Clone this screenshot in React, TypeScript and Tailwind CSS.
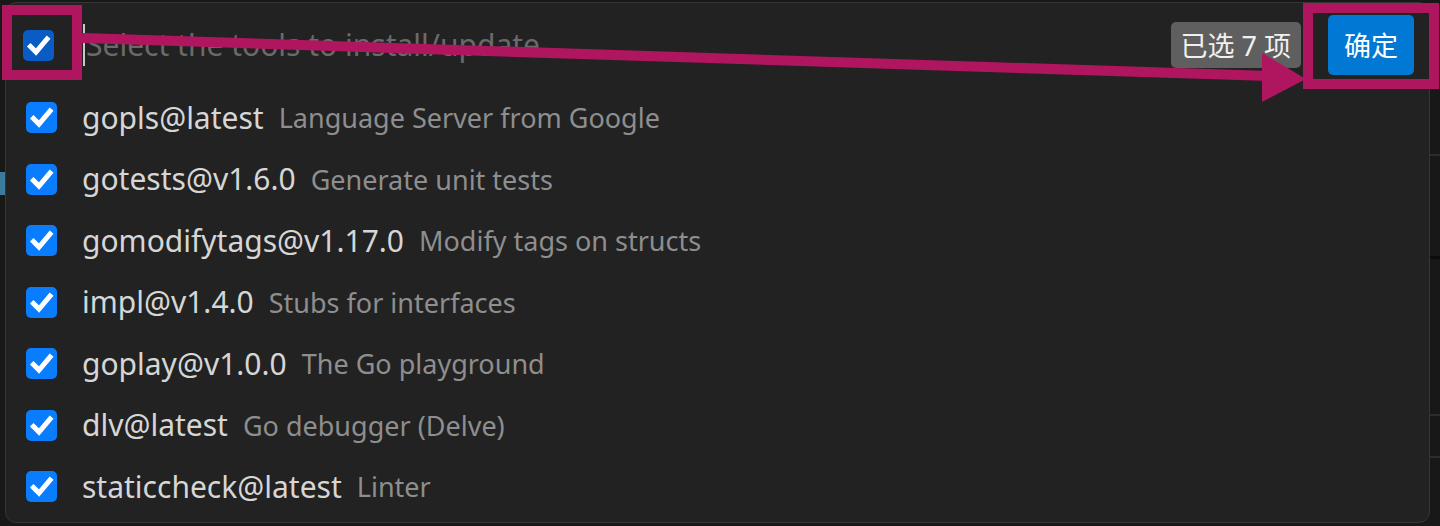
import React from "react";

const TOOLS = [
  { name: "gopls@latest", desc: "Language Server from Google" },
  { name: "gotests@v1.6.0", desc: "Generate unit tests" },
  { name: "gomodifytags@v1.17.0", desc: "Modify tags on structs" },
  { name: "impl@v1.4.0", desc: "Stubs for interfaces" },
  { name: "goplay@v1.0.0", desc: "The Go playground" },
  { name: "dlv@latest", desc: "Go debugger (Delve)" },
  { name: "staticcheck@latest", desc: "Linter" },
];

const FONT = { fontFamily: '"Noto Sans", "Noto Sans CJK SC", sans-serif' };

function Check({ dark }: { dark?: boolean }) {
  return (
    <div
      className={
        dark
          ? "flex h-[31px] w-[31px] shrink-0 items-center justify-center rounded-[5px] bg-[#0a5cc4]"
          : "flex h-[31px] w-[31px] shrink-0 items-center justify-center rounded-[5px] bg-[#0a7dff]"
      }
    >
      <svg width="31" height="31" viewBox="0 0 31 31" fill="none">
        <path
          d="M7.5 16.5l5.5 5.5L24 9"
          stroke="white"
          strokeWidth="5"
          strokeLinecap="square"
          strokeLinejoin="miter"
        />
      </svg>
    </div>
  );
}

export default function App() {
  return (
    <div className="relative flex h-[526px] w-[1440px] overflow-hidden bg-[#181818]" style={FONT}>
      {/* left sliver of the editor behind */}
      <div className="flex w-[5px] shrink-0 flex-col">
        <div className="h-[172px]" />
        <div className="h-[23px] w-[5px] bg-[#3a7c99]" />
      </div>

      {/* quick pick panel */}
      <div className="mt-[2px] flex h-[521px] w-[1425px] shrink-0 flex-col rounded-[11px] border border-[#363636] bg-[#222222]">
        <div className="flex h-[84px] items-center pl-[17px] pr-[15px]">
          <Check dark />
          <div className="ml-[29px] flex flex-1 items-center">
            <div className="h-[42px] w-[2px] bg-[#c8c8c8]" />
            <span className="ml-[1px] text-[30px] leading-none text-[#6a6a6a]">
              Select the tools to install/update
            </span>
          </div>
          <div className="flex h-[46px] items-center rounded-[5px] bg-[#5f5f5f] px-[10px] text-[27px] leading-none text-[#f0f0f0]">
            已选 7 项
          </div>
          <div className="ml-[27px] flex h-[60px] w-[86px] items-center justify-center rounded-[5px] bg-[#0078d4] text-[27px] leading-none text-white">
            确定
          </div>
        </div>
        <div className="flex flex-col">
          {TOOLS.map((t) => (
            <div key={t.name} className="flex h-[61.5px] items-center pl-[20px]">
              <Check />
              <span className="ml-[25px] text-[30px] leading-none text-[#d6d6d6]">{t.name}</span>
              <span className="ml-[15px] text-[27px] leading-none text-[#8e8e8e]">{t.desc}</span>
            </div>
          ))}
        </div>
      </div>

      {/* right sliver */}
      <div className="flex w-[10px] shrink-0 flex-col">
        <div className="h-[154px]" />
        <div className="h-[2px] bg-[#2c2c2c]" />
        <div className="h-[100px]" />
        <div className="h-[3px] bg-[#0c0c0c]" />
        <div className="h-[155px]" />
        <div className="h-[2px] bg-[#2c2c2c]" />
        <div className="h-[40px]" />
        <div className="h-[2px] bg-[#2c2c2c]" />
      </div>

      {/* annotations */}
      <div className="absolute left-[2px] top-[5px] h-[75px] w-[80px] border-[10px] border-[#b0165f]" />
      <div className="absolute left-[1303px] top-[3px] h-[86px] w-[136px] border-[10px] border-[#b0165f]" />
      <svg className="pointer-events-none absolute left-0 top-0" width="1440" height="526" viewBox="0 0 1440 526">
        <line x1="82" y1="38" x2="1270" y2="76" stroke="#b0165f" strokeWidth="10" />
        <polygon points="1262,53 1262,102 1306,79" fill="#b0165f" />
      </svg>
    </div>
  );
}
